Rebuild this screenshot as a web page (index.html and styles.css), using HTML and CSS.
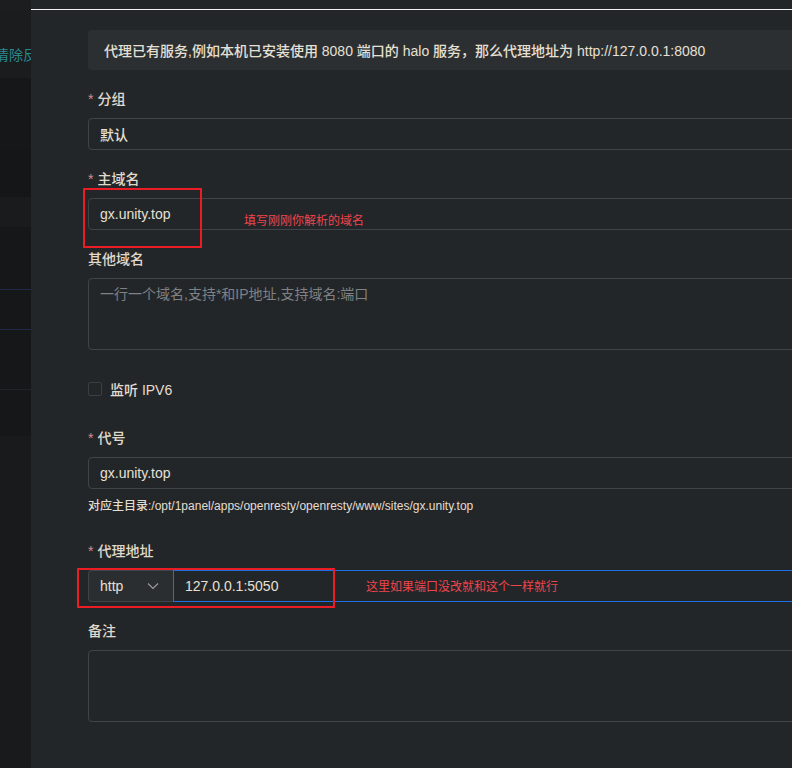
FILE: index.html
```html
<!DOCTYPE html>
<html lang="zh-CN">
<head>
<meta charset="utf-8">
<title>创建网站 - 反向代理</title>
<link rel="stylesheet" href="styles.css">
</head>
<body>
<div class="page">
  <aside class="side">
    <div class="band b1"></div>
    <div class="band b2"></div>
    <div class="band b3"><span class="side-link">清除反向代理缓存</span></div>
    <div class="band b4"></div>
    <div class="band b5"></div>
    <div class="band b6"></div>
    <div class="band b7"></div>
    <div class="band b8"></div>
    <div class="band b9"></div>
    <div class="band b10"></div>
    <div class="band b11"></div>
  </aside>
  <main class="drawer">
    <div class="drawer-head"></div>
    <div class="drawer-body">
      <div class="form">
        <div class="alert">代理已有服务,例如本机已安装使用 8080 端口的 halo 服务，那么代理地址为 http://127.0.0.1:8080</div>

        <div class="item">
          <div class="label"><span class="req">*</span>分组</div>
          <div class="input">默认</div>
        </div>

        <div class="item">
          <div class="label"><span class="req">*</span>主域名</div>
          <div class="input">gx.unity.top</div>
        </div>

        <div class="item">
          <div class="label">其他域名</div>
          <div class="textarea placeholder">一行一个域名,支持*和IP地址,支持域名:端口</div>
        </div>

        <div class="check-row">
          <span class="checkbox"></span>
          <span class="check-label">监听 IPV6</span>
        </div>

        <div class="item item-help">
          <div class="label"><span class="req">*</span>代号</div>
          <div class="input">gx.unity.top</div>
          <div class="help">对应主目录:/opt/1panel/apps/openresty/openresty/www/sites/gx.unity.top</div>
        </div>

        <div class="item">
          <div class="label"><span class="req">*</span>代理地址</div>
          <div class="group">
            <div class="select">
              <span>http</span>
              <svg class="chev" width="12" height="8" viewBox="0 0 12 8"><path d="M1 1.5 L6 6.5 L11 1.5" fill="none" stroke="#9a9ca0" stroke-width="1.1"/></svg>
            </div>
            <div class="input focus">127.0.0.1:5050</div>
          </div>
        </div>

        <div class="item">
          <div class="label">备注</div>
          <div class="textarea"></div>
        </div>

        <div class="mark mark-domain"></div>
        <div class="note note-domain">填写刚刚你解析的域名</div>
        <div class="mark mark-proxy"></div>
        <div class="note note-proxy">这里如果端口没改就和这个一样就行</div>
      </div>
    </div>
  </main>
</div>
</body>
</html>
```

FILE: styles.css
```css
* { box-sizing: border-box; }
html, body {
  margin: 0;
  padding: 0;
  width: 792px;
  height: 768px;
  overflow: hidden;
  background: #232629;
  font-family: "Liberation Sans", "Noto Sans CJK SC", sans-serif;
  font-weight: 500;
  color: #e3ddd1;
}
.page {
  display: flex;
  width: 792px;
  height: 768px;
}
.side {
  width: 31px;
  flex: none;
  background: #1a1b1d;
  display: flex;
  flex-direction: column;
  overflow: hidden;
}
.band { flex: none; width: 100%; }
.b1 { height: 10px; background: #1c1d1f; }
.b2 { height: 20px; background: #1b1c1e; }
.b3 { height: 48px; background: #1b1c1e; display: flex; align-items: center; overflow: hidden; white-space: nowrap; }
.side-link { margin-left: -5px; font-size: 14px; font-weight: 400; color: #2a8a90; }
.b4 { height: 72px; background: #161719; }
.b5 { height: 47px; background: #151618; }
.b6 { height: 30px; background: #1a1b1d; }
.b7 { height: 63px; background: #161719; border-bottom: 1px solid #1f2a44; }
.b8 { height: 40px; background: #161719; border-bottom: 1px solid #1f2a44; }
.b9 { height: 60px; background: #161719; border-bottom: 1px solid #222326; }
.b10 { height: 46px; background: #161719; }
.b11 { flex: 1; background: #191a1c; }

.drawer {
  flex: 1;
  min-width: 0;
  background: #232629;
  display: flex;
  flex-direction: column;
}
.drawer-head { height: 9px; flex: none; }
.drawer-body {
  border-top: 1px solid #f2f2f2;
  flex: 1;
  padding: 20px 0 0 57px;
}
.form {
  position: relative;
  width: 760px;
}
.alert {
  height: 40px;
  background: #2c2f32;
  border-radius: 4px;
  padding: 0 16px;
  display: flex;
  align-items: center;
  font-size: 14px;
  color: #e6e0d4;
  white-space: nowrap;
  margin-bottom: 18px;
}
.item { margin-bottom: 18px; }
.label {
  height: 22px;
  line-height: 22px;
  font-size: 14px;
  color: #e0dacd;
  margin-bottom: 8px;
}
.req {
  color: #d98a8c;
  margin-right: 4px;
}
.input {
  height: 32px;
  border: 1px solid #404347;
  border-radius: 4px;
  padding: 0 11px;
  display: flex;
  align-items: center;
  font-size: 14px;
  color: #e6e0d4;
}
.textarea {
  height: 72px;
  border: 1px solid #404347;
  border-radius: 4px;
  padding: 5px 11px;
  font-size: 14px;
  line-height: 20px;
}
.placeholder { color: #7f8184; font-weight: 400; }
.check-row {
  display: flex;
  align-items: center;
  height: 22px;
  margin-top: 28px;
  margin-bottom: 27px;
}
.checkbox {
  width: 14px;
  height: 14px;
  border: 1px solid #3a3d41;
  border-radius: 2px;
  margin-right: 8px;
}
.check-label { font-size: 14px; color: #e3ddd1; }
.item-help { margin-bottom: 25px; }
.help {
  font-size: 12px;
  line-height: 18px;
  margin-top: 8px;
  color: #e3ddd1;
  white-space: nowrap;
}
.group { display: flex; height: 32px; }
.select {
  width: 85px;
  flex: none;
  background: #2b2e31;
  border: 1px solid #404347;
  border-right: none;
  border-radius: 4px 0 0 4px;
  padding: 0 11px;
  display: flex;
  align-items: center;
  justify-content: space-between;
  font-size: 14px;
  color: #e6e0d4;
}
.chev { margin-right: 3px; }
.input.focus {
  flex: 1;
  border: 1px solid #1d6fe3;
  border-radius: 0;
  height: 32px;
}

.mark {
  position: absolute;
  border: 2px solid #ec1c24;
}
.mark-domain { left: -5px; top: 158px; width: 119px; height: 60px; }
.mark-proxy { left: -11px; top: 538px; width: 258px; height: 40px; }
.note {
  position: absolute;
  font-size: 12px;
  font-weight: 400;
  color: #f0444c;
  white-space: nowrap;
}
.note-domain { left: 156px; top: 181px; }
.note-proxy { left: 278px; top: 547px; }
```
